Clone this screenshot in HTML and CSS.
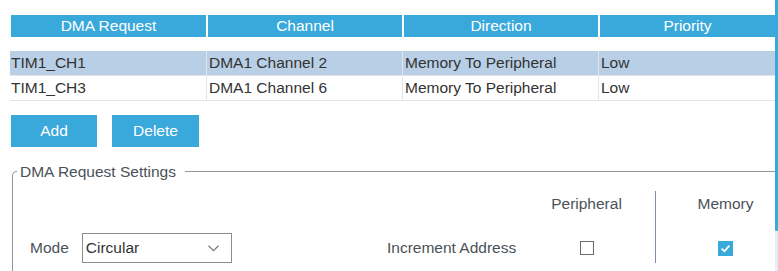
FILE: index.html
```html
<!DOCTYPE html>
<html lang="en">
<head>
    <meta charset="UTF-8">
    <meta name="viewport" content="width=device-width, initial-scale=1.0">
    <title>DMA Settings</title>
    <link rel="stylesheet" href="styles.css">
</head>
<body>
    <div class="window">
        <main class="content">
            <!-- Request table -->
            <div class="dma-table">
                <div class="table-head">
                    <div class="cell">DMA Request</div>
                    <div class="cell">Channel</div>
                    <div class="cell">Direction</div>
                    <div class="cell">Priority</div>
                </div>
                <div class="table-row selected">
                    <div class="cell">TIM1_CH1</div>
                    <div class="cell">DMA1 Channel 2</div>
                    <div class="cell">Memory To Peripheral</div>
                    <div class="cell">Low</div>
                </div>
                <div class="table-row">
                    <div class="cell">TIM1_CH3</div>
                    <div class="cell">DMA1 Channel 6</div>
                    <div class="cell">Memory To Peripheral</div>
                    <div class="cell">Low</div>
                </div>
            </div>

            <!-- Buttons -->
            <div class="actions">
                <button type="button" class="btn">Add</button>
                <button type="button" class="btn">Delete</button>
            </div>

            <!-- Settings -->
            <fieldset class="settings">
                <legend>DMA Request Settings</legend>
                <div class="settings-grid">
                    <div class="col-head peripheral">Peripheral</div>
                    <div class="separator"></div>
                    <div class="col-head memory">Memory</div>

                    <div class="mode-field">
                        <label for="mode">Mode</label>
                        <div class="select">
                            <span id="mode">Circular</span>
                            <svg class="chevron" width="11" height="7" viewBox="0 0 11 7">
                                <polyline points="0.5,0.8 5.5,5.6 10.5,0.8" fill="none" stroke="#7a7a7a" stroke-width="1.2"/>
                            </svg>
                        </div>
                    </div>
                    <div class="increment-label">Increment Address</div>
                    <div class="check-cell peripheral"><span class="checkbox"></span></div>
                    <div class="check-cell memory">
                        <span class="checkbox checked">
                            <svg width="15" height="15" viewBox="0 0 15 15">
                                <polyline points="3.6,7.6 6.4,10.3 11.4,4.6" fill="none" stroke="#fff" stroke-width="1.8"/>
                            </svg>
                        </span>
                    </div>
                </div>
            </fieldset>
        </main>
        <div class="scrollbar"><div class="thumb"></div></div>
    </div>
</body>
</html>
```

FILE: styles.css
```css
:root {
    --header-blue: #39a9dc;
    --selected-row: #b8cfe6;
    --text-color: #333;
    --muted-text: #4a5259;
    --row-border: #e2e6ea;
    --frame-border: #8d979f;
    --separator: #7d8cb8;
}

* {
    margin: 0;
    padding: 0;
    box-sizing: border-box;
}

body {
    font-family: 'Liberation Sans', Arial, sans-serif;
    font-size: 15.5px;
    color: var(--text-color);
    background: #fff;
    overflow: hidden;
}

.window {
    display: flex;
    width: 778px;
    height: 271px;
    overflow: hidden;
}

.content {
    width: 775px;
    flex: none;
    padding: 15px 0 0 10px;
    overflow: hidden;
}

/* Table */
.table-head,
.table-row {
    display: grid;
    grid-template-columns: 196px 196px 196px 1fr;
}

.table-head {
    height: 22px;
    margin-bottom: 14px;
}

.table-head .cell {
    background: var(--header-blue);
    color: #fff;
    text-align: center;
    line-height: 22px;
    border-left: 2px solid #fff;
}

.table-head .cell:first-child {
    border-left-width: 1px;
}

.table-row {
    height: 25px;
    border-bottom: 1px solid var(--row-border);
}

.table-row .cell {
    line-height: 24px;
    padding-left: 2px;
    border-left: 1px solid var(--row-border);
    white-space: nowrap;
}

.table-row .cell:first-child {
    border-left: none;
    padding-left: 1px;
}

.table-row.selected {
    background: var(--selected-row);
}

/* Buttons */
.actions {
    display: flex;
    gap: 15px;
    margin: 14px 0 0 1px;
}

.btn {
    width: 86px;
    height: 32px;
    border: none;
    background: var(--header-blue);
    color: #fff;
    font-family: inherit;
    font-size: 15.5px;
    cursor: pointer;
}

.btn + .btn {
    width: 87px;
}

/* Settings frame */
.settings {
    margin: 16px 0 0 2px;
    border: 1px solid var(--frame-border);
    border-right: none;
    border-bottom: none;
    border-top-left-radius: 5px;
    padding: 0;
    height: 140px;
}

.settings legend {
    margin-left: 4px;
    padding: 0 9px 0 3px;
    color: var(--muted-text);
    line-height: 17px;
}

.settings-grid {
    display: grid;
    grid-template-columns: 374px 131px 137px 1px 139px;
    grid-template-rows: 34px 38px;
    margin-top: 11px;
}

.col-head {
    padding-top: 4px;
    line-height: 18px;
    text-align: center;
    color: var(--muted-text);
}

.col-head.peripheral {
    grid-column: 3;
}

.separator {
    grid-column: 4;
    grid-row: 1 / span 2;
    background: var(--separator);
}

.col-head.memory {
    grid-column: 5;
}

.mode-field {
    grid-column: 1;
    grid-row: 2;
    display: flex;
    align-items: center;
    gap: 13px;
    padding: 8px 0 0 17px;
    height: 38px;
}

.mode-field label {
    color: var(--muted-text);
}

.select {
    width: 150px;
    height: 30px;
    border: 1px solid #8c8c8c;
    display: flex;
    align-items: center;
    justify-content: space-between;
    padding: 0 12px 0 3px;
}

.chevron {
    display: block;
}

.increment-label {
    grid-column: 2;
    grid-row: 2;
    padding-top: 8px;
    line-height: 30px;
    color: var(--muted-text);
    white-space: nowrap;
}

.check-cell {
    grid-row: 2;
    display: flex;
    justify-content: center;
    align-items: center;
    padding-top: 8px;
}

.check-cell.peripheral {
    grid-column: 3;
}

.check-cell.memory {
    grid-column: 5;
}

.checkbox {
    display: block;
    width: 14px;
    height: 14px;
    border: 1.5px solid #6b6b6b;
}

.checkbox.checked {
    width: 15px;
    height: 15px;
    border: none;
    background: var(--header-blue);
}

.checkbox svg {
    display: block;
}

/* Scrollbar */
.scrollbar {
    width: 3px;
    flex: none;
    background: #e6edf4;
}

.thumb {
    height: 231px;
    background: var(--header-blue);
    border-radius: 0 0 2px 2px;
}
```
